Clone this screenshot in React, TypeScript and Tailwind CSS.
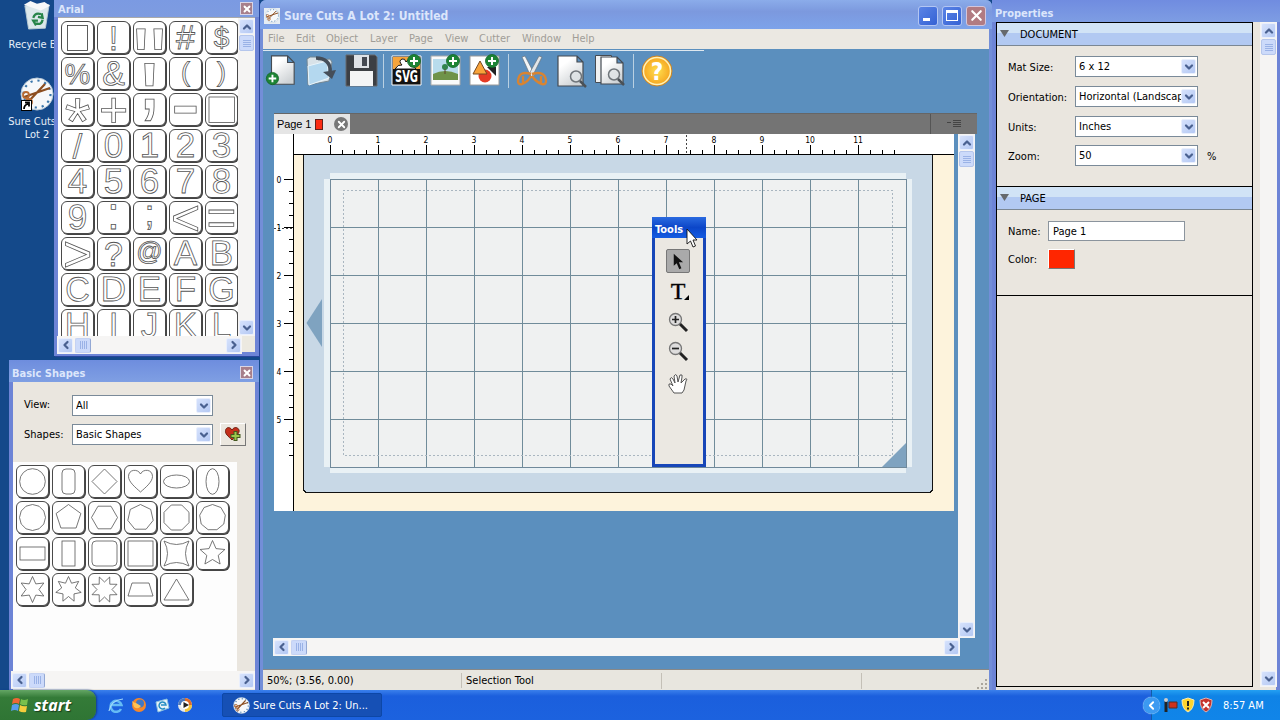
import type { ReactNode } from 'react';
import { ChevronDown, ChevronLeft, ChevronRight, ChevronUp, X } from 'lucide-react';

const chevrons = { up: ChevronUp, down: ChevronDown, left: ChevronLeft, right: ChevronRight };

type Direction = keyof typeof chevrons;

// character, font size, vertical centre of the ink above the baseline (em)
const glyphs: [string, number, number][] = [
  ['', 0, 0], ['!', 34, 0.36], ['"', 96, 0.595], ['#', 34, 0.35], ['$', 28, 0.34],
  ['%', 29, 0.35], ['&', 34, 0.35], ["'", 104, 0.595], ['(', 27, 0.26], [')', 27, 0.26],
  ['*', 66, 0.53], ['+', 50, 0.34], [',', 92, -0.01], ['-', 88, 0.27], ['.', 0, 0],
  ['/', 34, 0.36], ['0', 35, 0.34], ['1', 35, 0.34], ['2', 35, 0.34], ['3', 35, 0.34],
  ['4', 35, 0.34], ['5', 35, 0.34], ['6', 35, 0.34], ['7', 35, 0.34], ['8', 35, 0.34],
  ['9', 35, 0.34], [':', 46, 0.26], [';', 36, 0.2], ['<', 50, 0.34], ['=', 51, 0.34],
  ['>', 50, 0.34], ['?', 34, 0.36], ['@', 26, 0.26], ['A', 35, 0.34], ['B', 35, 0.34],
  ['C', 34, 0.34], ['D', 35, 0.34], ['E', 35, 0.34], ['F', 35, 0.34], ['G', 34, 0.34],
  ['H', 35, 0.34], ['I', 35, 0.34], ['J', 35, 0.34], ['K', 35, 0.34], ['L', 35, 0.34],
];

function polygon(sides: number, r = 13, inner = 0, turn = 0) {
  const count = inner ? sides * 2 : sides;
  return Array.from({ length: count }, (_, i) => {
    const a = -Math.PI / 2 + turn + (i * 2 * Math.PI) / count;
    const radius = inner && i % 2 ? inner : r;
    return `${(16.5 + radius * Math.cos(a)).toFixed(1)},${(16.5 + radius * Math.sin(a)).toFixed(1)}`;
  }).join(' ');
}

const shapes: ReactNode[] = [
  <circle cx="16.5" cy="16.5" r="12.8" />,
  <rect x="10" y="4" width="13" height="25" rx="4" />,
  <path d="M16.5 4 29 16.5 16.5 29 4 16.5Z" />,
  <path d="M16.5 27C12 23 4.500 17 4.500 11.500C4.500 4 14 3.500 16.500 9C19 3.500 28.500 4 28.500 11.500C28.500 17 21 23 16.500 27Z" />,
  <ellipse cx="16.5" cy="16.500" rx="13" ry="6.500" />,
  <ellipse cx="16.5" cy="16.5" rx="6.500" ry="12.800" />,
  <polygon points={polygon(12)} />,
  <polygon points={polygon(5)} />,
  <polygon points={polygon(6, 13, 0, Math.PI / 6)} />,
  <polygon points={polygon(7)} />,
  <polygon points={polygon(8, 13.500, 0, Math.PI / 8)} />,
  <polygon points={polygon(9)} />,
  <rect x="4" y="10" width="25" height="13" />,
  <rect x="10" y="4" width="13" height="25" />,
  <rect x="4" y="4" width="25" height="25" rx="4" />,
  <rect x="4" y="4" width="25" height="25" />,
  <path d="M4 4Q16.500 11 29 4Q22 16.500 29 29Q16.500 22 4 29Q11 16.500 4 4Z" />,
  <polygon points={polygon(5, 13, 6)} />,
  <polygon points={polygon(6, 13, 6.5)} />,
  <polygon points={polygon(7, 13, 7)} />,
  <polygon points={polygon(8, 13.500, 7.500, Math.PI / 8)} />,
  <path d="M8 10H25L29 23H4Z" />,
  <path d="M16.500 6 29 27H4Z" />,
];

function Tile({ children }: { children: ReactNode }) {
  return (
    <div className="h-[33px] w-[33px] shrink-0 rounded-[6px] border border-[#4a4a4a] bg-white shadow-[1px_1px_0_#444]">
      <svg width="33" height="33" viewBox="0 0 33 33" className="-ml-px -mt-px" fill="none" stroke="#555" strokeWidth="0.8">
        {children}
      </svg>
    </div>
  );
}

function Glyph({ glyph }: { glyph: [string, number, number] }) {
  const [char, size, mid] = glyph;
  if (char === '') return <Tile><rect x="6.500" y="4.500" width="20" height="25" stroke="#333" /></Tile>;
  if (char === '.') return <Tile><rect x="4" y="4" width="25.500" height="25.500" /></Tile>;
  return (
    <Tile>
      <text
        x="16.5"
        y={16.5 + size * mid}
        fontSize={size}
        textAnchor="middle"
        fontFamily="Liberation Sans, sans-serif"
        textRendering="geometricPrecision"
      >
        {char}
      </text>
    </Tile>
  );
}

function ScrollButton({ dir }: { dir: Direction }) {
  const Icon = chevrons[dir];
  return (
    <div className="flex h-[15px] w-[15px] shrink-0 items-center justify-center rounded-[2px] border border-[#e9effd] bg-gradient-to-br from-[#d6e2fc] to-[#b4c8f3]">
      <Icon size={12} strokeWidth={4.500} color="#4a6190" />
    </div>
  );
}

function Scrollbar({ vertical = false, thumb = true }: { vertical?: boolean; thumb?: boolean }) {
  return (
    <div
      className={
        vertical
          ? 'flex h-full w-[17px] flex-col items-center justify-between bg-[#f5f4f3] p-px'
          : 'flex h-[18px] w-full items-center justify-between bg-[#f6f5f4] p-px'
      }
    >
      <div className={vertical ? 'flex flex-col gap-px' : 'flex gap-[2px]'}>
        <ScrollButton dir={vertical ? 'up' : 'left'} />
        {thumb && (
          <div
            className={
              vertical
                ? 'flex h-4 w-[15px] flex-col items-center justify-center gap-px rounded-[2px] border border-[#b5c6ec] bg-[#ccdafa]'
                : 'flex h-[15px] w-4 items-center justify-center gap-px rounded-[2px] border border-r-[#93a8d4] border-[#c5d2f2] bg-[#ccdafa]'
            }
          >
            {[0, 1, 2, 3].map((i) => (
              <span key={i} className={vertical ? 'h-px w-2 bg-[#9ab2e6]' : 'h-2 w-px bg-[#9ab2e6]'} />
            ))}
          </div>
        )}
      </div>
      <ScrollButton dir={vertical ? 'down' : 'right'} />
    </div>
  );
}

function Select({ value, className }: { value: string; className: string }) {
  return (
    <div className={`flex h-[21px] items-center justify-between border border-[#7a8a99] bg-white pl-[3px] pr-px ${className}`}>
      <span className="min-w-0 overflow-hidden whitespace-nowrap pt-px">{value}</span>
      <ScrollButton dir="down" />
    </div>
  );
}

function CloseBox() {
  return (
    <div className="flex h-[13px] w-[13px] items-center justify-center border border-[#d9d5e6] bg-[#a77f8b]">
      <X size={10} strokeWidth={4.500} color="#fff" />
    </div>
  );
}

function Plus({ x, y }: { x: number; y: number }) {
  return (
    <g>
      <circle cx={x} cy={y} r="6.500" fill="#1d8434" stroke="#126427" strokeWidth="0.8" />
      <path d={`M${x - 4} ${y}h8M${x} ${y - 4}v8`} stroke="#fff" strokeWidth="2" />
    </g>
  );
}

function Magnifier() {
  return (
    <g>
      <circle cx="22" cy="22.500" r="5.500" fill="#dfe3e6" fillOpacity="0.800" stroke="#70767b" strokeWidth="1.500" />
      <path d="M26 27l6 6" stroke="#4b5157" strokeWidth="2.500" />
    </g>
  );
}

function ToolIcon({ children, className = 'w-[39px]' }: { children: ReactNode; className?: string }) {
  return (
    <div className={`flex shrink-0 justify-center ${className}`}>
      <svg width="36" height="38" viewBox="0 0 36 38" fill="none">{children}</svg>
    </div>
  );
}

function Separator() {
  return <div className="mt-[2px] h-[34px] w-px shrink-0 bg-[#b9d0e2]" />;
}

function Clock({ size }: { size: number }) {
  return (
    <svg width={size} height={size} viewBox="0 0 34 34" className="shrink-0">
      <circle cx="17" cy="17" r="16" fill="#f6f8fa" stroke="#b8c9d8" />
      <circle cx="17" cy="17" r="13.500" fill="none" stroke="#3c77ab" strokeWidth="2.200" strokeDasharray="2.200 4.870" />
      <path d="M4 20 30 11M8 25 25 7" stroke="#8c4e20" strokeWidth="2.200" />
      <circle cx="6" cy="18" r="3" fill="none" stroke="#b86a31" strokeWidth="1.800" />
      <circle cx="9" cy="25" r="3" fill="none" stroke="#b86a31" strokeWidth="1.800" />
    </svg>
  );
}

function Toolbar() {
  return (
    <div className="flex h-[62px] items-start pt-px">
      <svg width="0" height="0" className="absolute">
        <defs>
          <linearGradient id="paper" x2="0.6" y2="1">
            <stop offset="0.3" stopColor="#fff" />
            <stop offset="1" stopColor="#cfd3d6" />
          </linearGradient>
          <radialGradient id="gold">
            <stop stopColor="#ffdf4f" />
            <stop offset="1" stopColor="#f5a21d" />
          </radialGradient>
        </defs>
      </svg>
      <ToolIcon className="w-[34px]">
        <path d="M9 3h17l7 7v23H9z M26 3v7h7" fill="url(#paper)" stroke="#454b52" strokeWidth="1.200" />
        <Plus x={10} y={27} />
      </ToolIcon>
      <ToolIcon className="w-[46px]">
        <path d="M5 7l3-2h6l2 3 12-1 2 3-3 19-21 4z" fill="#d8e2e8" stroke="#738693" />
        <path d="M6 14l19-5 2 17L7 33z" fill="#b4d8ef" stroke="#e8f4fb" />
        <path d="M14 6c9 0 15 5 14 14" stroke="#454e59" strokeWidth="3.500" />
        <path d="M21 20l13-2-4 9z" fill="#454e59" />
      </ToolIcon>
      <ToolIcon className="w-[36px]">
        <path d="M3 3h29l2 2v29H3z" fill="#3c3f44" stroke="#67696c" />
        <path d="M11 3h15v13H11z" fill="#dfe2e6" />
        <path d="M19 5h5v9h-5z" fill="#454951" />
        <path d="M7 19h23v15H7z" fill="#f3f4f5" />
      </ToolIcon>
      <div className="w-[4px]" />
      <Separator />
      <div className="w-[3px]" />
      <ToolIcon>
        <path d="M3 4h29v29H3z" fill="#111" stroke="#fff" />
        <path d="M4 5h27v12H4z" fill="#f5a43b" />
        <path d="M6 17q3-5 7-4-4-4 0-6 3-1 4 3 2-4 5-2 2 3-1 6 5 0 6 3z" fill="#fff" stroke="#111" />
        <path d="M4 17h27v15H4z" fill="#111" />
        <text x="17.500" y="30" textAnchor="middle" fontSize="15" fontWeight="700" fill="#fff" textLength="23" lengthAdjust="spacingAndGlyphs">SVG</text>
        <Plus x={25} y={9} />
      </ToolIcon>
      <ToolIcon>
        <path d="M3 4h29v29H3z" fill="#f9fafa" stroke="#aaa" />
        <path d="M5 7h25v21H5z" fill="#b8dcec" />
        <path d="M5 22q12-6 25 0v6H5z" fill="#6f9349" />
        <circle cx="17" cy="15" r="3" fill="#30844d" />
        <path d="M17 17v5" stroke="#61452a" />
        <Plus x={25} y={9} />
      </ToolIcon>
      <ToolIcon>
        <path d="M3 4h29v29H3z" fill="#fff" stroke="#999" />
        <circle cx="18" cy="24" r="6.500" fill="#e53b25" />
        <path d="M13 9l7 13H6z" fill="#f9a33a" stroke="#754820" />
        <path d="M20 15h9v9z" fill="#222" />
        <Plus x={25} y={9} />
      </ToolIcon>
      <div className="w-[4px]" />
      <Separator />
      <div className="w-[3px]" />
      <ToolIcon>
        <path d="M8 5l3-1 10 19-4 2z" fill="#f3f5f6" stroke="#67727d" strokeWidth="0.700" />
        <path d="M28 5l-3-1-10 18 3 3z" fill="#e2e6e9" stroke="#67727d" strokeWidth="0.700" />
        <path d="M17 22q-12-4-13 7 0 4 4 3 6-2 9-8M18 22q13-4 14 7 0 4-4 3-6-2-10-8M9 24v7M27 24v7" stroke="#d88432" strokeWidth="2.400" />
      </ToolIcon>
      <ToolIcon>
        <path d="M5 4h19l6 6v24H5z M24 4v6h6" fill="url(#paper)" stroke="#454b52" strokeWidth="1.200" />
        <g transform="translate(1 2)"><Magnifier /></g>
      </ToolIcon>
      <ToolIcon>
        <path d="M3.500 3.500h16v27h-16z" fill="#f0f1f2" stroke="#454b52" />
        <path d="M9 5h16l6 6v21H9z M25 5v6h6" fill="url(#paper)" stroke="#454b52" strokeWidth="1.200" />
        <Magnifier />
      </ToolIcon>
      <div className="w-[4px]" />
      <Separator />
      <div className="w-[3px]" />
      <ToolIcon>
        <circle cx="18" cy="19" r="15" fill="url(#gold)" stroke="#c8852a" />
        <circle cx="18" cy="19" r="13.500" stroke="#fff1b5" strokeWidth="1.500" />
        <text x="18" y="27.500" textAnchor="middle" fontSize="24" fontWeight="700" fill="#fff">?</text>
      </ToolIcon>
    </div>
  );
}

function Canvas() {
  const topTicks = Array.from({ length: 48 }, (_, i) => i);
  const leftTicks = Array.from({ length: 24 }, (_, i) => i);
  return (
    <svg width="680" height="377" viewBox="274 134 680 377" className="block shrink-0" shapeRendering="crispEdges">
      <rect x="274" y="134" width="680" height="377" fill="#fff" />
      <rect x="294" y="155" width="660" height="356" fill="#fdf3dc" />
      <path d="M303.500 155V488q0 4.500 4.500 4.500H928q4.500 0 4.500-4.500V155" fill="#c8d8e6" stroke="#111" />
      <path d="M330 173H906V179H912V467H906V473H330V467H324V179H330Z" fill="#e9f1f5" />
      <rect x="330.500" y="179.500" width="576" height="288" fill="#eff1f1" stroke="#70899a" />
      {Array.from({ length: 11 }, (_, i) => (
        <path key={i} d={`M${378.500 + i * 48} 180V467`} stroke="#708c9a" />
      ))}
      {Array.from({ length: 5 }, (_, i) => (
        <path key={i} d={`M331 ${227.500 + i * 48}H906`} stroke="#708c9a" />
      ))}
      <rect x="343" y="190.500" width="549.500" height="264.500" fill="none" stroke="#a9b6c0" strokeDasharray="2 2" />
      <g shapeRendering="auto" fill="#7fa3c0">
        <path d="M306.500 323 322 299V347Z" />
        <path d="M882 467 906 443V467Z" />
      </g>
      <path d="M293 154.500H954M293.500 134V511" stroke="#000" />
      {topTicks.map((i) => (
        <path key={i} d={`M${330.500 + i * 12} ${i % 4 ? 150 : 145}V154`} stroke="#000" />
      ))}
      {leftTicks.map((i) => (
        <path key={i} d={`M${i % 4 ? 289 : 284} ${179.500 + i * 12}H293`} stroke="#000" />
      ))}
      <path d="M686.500 135V154" stroke="#444" strokeDasharray="2 2" />
      <path d="M274 228.500H293" stroke="#444" strokeDasharray="2 2" />
      <g fontSize="8.500" textAnchor="middle" fill="#000">
        {Array.from({ length: 12 }, (_, i) => (
          <text key={i} x={330 + i * 48} y="143">{i}</text>
        ))}
        {Array.from({ length: 6 }, (_, i) => (
          <text key={i} x="279" y={183 + i * 48}>{i}</text>
        ))}
      </g>
    </svg>
  );
}

function ArialPanel() {
  return (
    <section className="absolute left-[54px] top-0 flex h-[356px] w-[205px] flex-col border-x-4 border-b-4 border-[#6d84d6] bg-[#f4f2f0] shadow-[1px_1px_0_#28469c]">
      <header className="-mx-1 flex h-[17px] shrink-0 items-center justify-between bg-gradient-to-b from-[#7b9ae2] to-[#7e9ce0] pl-1 pr-[6px]">
        <h2 className="pt-[2px] font-bold text-[#dce6fb]">Arial</h2>
        <CloseBox />
      </header>
      <div className="flex h-[319px] shrink-0 border-t border-[#aaa]">
        <div className="grid h-full w-[182px] shrink-0 grid-cols-[repeat(5,33px)] content-start gap-[3px] overflow-hidden bg-white pl-[3px] pt-[3px]">
          {glyphs.map((glyph, i) => <Glyph key={i} glyph={glyph} />)}
        </div>
        <div className="-ml-[2px] h-full w-[17px]"><Scrollbar vertical /></div>
      </div>
      <div className="flex h-4 items-center bg-[#ece9e0]">
        <div className="-ml-px w-[185px] pt-[2px]"><Scrollbar /></div>
      </div>
    </section>
  );
}

function ShapesPanel() {
  return (
    <section className="absolute left-[9px] top-[360px] flex h-[332px] w-[250px] flex-col border-x-4 border-b-2 border-[#6d84d6] bg-[#eae6df]">
      <header className="-mx-1 flex h-[22px] shrink-0 items-center justify-between bg-gradient-to-b from-[#6e8dde] to-[#7f9fe3] pl-[3px] pr-[6px] pt-[3px]">
        <h2 className="pt-[2px] font-bold text-[#dce6fb]">Basic Shapes</h2>
        <CloseBox />
      </header>
      <div className="h-20 shrink-0 pl-[11px] pt-[13px]">
        <div className="mb-2 flex items-center">
          <span className="w-12 -translate-y-px">View:</span>
          <Select value="All" className="w-[141px]" />
        </div>
        <div className="flex items-center">
          <span className="w-12 whitespace-nowrap pt-px">Shapes:</span>
          <Select value="Basic Shapes" className="w-[141px]" />
          <button className="-my-1 ml-[7px] flex h-[23px] w-[26px] items-center justify-center border border-b-[#777] border-l-white border-r-[#777] border-t-white bg-[#ebe7df]">
            <svg width="18" height="17" viewBox="0 0 18 17">
              <path d="M8 14C4 10 1 8 1.500 4.500S6 .5 8 4c2-3.500 6-3 7 0s-3 6-7 10Z" fill="#c52f1b" stroke="#712214" />
              <path d="M11.500 5v10M6.500 10h10" stroke="#43571e" strokeWidth="4" />
              <path d="M11.500 6v8M7.500 10h8" stroke="#9cc74c" strokeWidth="2" />
            </svg>
          </button>
        </div>
      </div>
      <div className="grid h-[209px] w-[224px] shrink-0 grid-cols-[repeat(6,33px)] content-start gap-[3px] bg-[#fdfdfd] pl-[3px] pt-[3px]">
        {shapes.map((shape, i) => <Tile key={i}>{shape}</Tile>)}
      </div>
      <div className="-ml-[2px] w-[244px]"><Scrollbar /></div>
    </section>
  );
}

const menu = [
  ['File', 'w-[28px]'], ['Edit', 'w-[30px]'], ['Object', 'w-[44px]'], ['Layer', 'w-[39px]'], ['Page', 'w-[36px]'],
  ['View', 'w-[34px]'], ['Cutter', 'w-[43px]'], ['Window', 'w-[50px]'], ['Help', 'w-[30px]'],
];

function MainWindow() {
  return (
    <section className="absolute left-[260px] top-0 flex h-[691px] w-[732px] flex-col rounded-t-[6px] border-x-[3px] border-[#738ed8] bg-[#5b8fbe]">
      <header className="-mx-[3px] flex h-[29px] shrink-0 items-center rounded-t-[6px] bg-gradient-to-b from-[#8bacea] via-[#7c99de] via-40% to-[#7da3ea] px-[4px] pt-[2px]">
        <div className="flex h-4 w-4 items-center justify-center bg-[#e6edf3]"><Clock size={15} /></div>
        <h1 className="ml-[4px] grow pt-px text-[12px] font-bold tracking-[0.05px] text-[#dce6fb]">Sure Cuts A Lot 2: Untitled</h1>
        <div className="mr-[2px] flex gap-1">
          <div className="flex h-[20px] w-[20px] items-end rounded-[3px] border border-[#b3c6f3] bg-gradient-to-br from-[#5b84e6] to-[#3461d4] p-1"><span className="h-[3px] w-[7px] bg-white" /></div>
          <div className="flex h-[20px] w-[20px] items-center justify-center rounded-[3px] border border-[#b3c6f3] bg-gradient-to-br from-[#5b84e6] to-[#3461d4]"><span className="h-[11px] w-3 border border-t-[3px] border-white" /></div>
          <div className="flex h-[20px] w-[20px] items-center justify-center rounded-[3px] border border-[#d3c6dc] bg-[#b17b82]"><X size={17} strokeWidth={3} color="#fff" /></div>
        </div>
      </header>
      <nav className="flex h-[20px] shrink-0 items-center bg-[#ebe8e2] pl-[5px] text-[#a09d97]">
        {menu.map(([label, width]) => <span key={label} className={width}>{label}</span>)}
      </nav>
      <div className="mt-px h-px w-[441px] shrink-0 bg-[#dfe8ef]" />
      <Toolbar />
      <div className="ml-[11px] flex h-[21px] w-[703px] shrink-0 border-t border-[#666] bg-[#747474]">
        <div className="flex w-[76px] items-center bg-[#e5e5e5] pl-[3px] font-['Liberation_Sans',sans-serif] text-[11px]">
          <span className="w-[38px] shrink-0 whitespace-nowrap tracking-[-0.1px]">Page 1</span>
          <span className="h-[11px] w-2 shrink-0 border border-[#61201a] bg-[#fb2b12]" />
          <span className="ml-[11px] flex h-[14px] w-[14px] shrink-0 items-center justify-center rounded-full bg-[#777]"><X size={11} strokeWidth={4} color="#fff" /></span>
        </div>
        <div className="ml-auto flex w-[47px] items-center justify-center border-l border-[#555]">
          <svg width="16" height="10" fill="none" stroke="#444"><path d="M1 3.500h4M7 1.500h8M7 3.500h8M7 5.500h8M7 7.500h8" /></svg>
        </div>
      </div>
      <div className="ml-[11px] flex h-[504px] shrink-0">
        <Canvas />
        <div className="ml-[4px]"><Scrollbar vertical /></div>
      </div>
      <div className="ml-[10px] w-[687px] shrink-0"><Scrollbar /></div>
      <footer className="mt-auto flex h-[22px] shrink-0 items-center border-t border-[#888] bg-[#e8e6df]">
        <span className="w-[198px] pl-1 pt-px">50%; (3.56, 0.00)</span>
        <span className="w-[200px] border-l border-[#c4c0b7] pl-[4px] pt-px">Selection Tool</span>
        <span className="h-4 w-[200px] border-l border-[#c4c0b7]" />
        <span className="h-4 grow border-l border-[#c4c0b7]" />
        <svg width="13" height="13" fill="#aaa69d" className="self-end"><path d="M9 1h2v2H9zM5 5h2v2H5zM9 5h2v2H9zM1 9h2v2H1zM5 9h2v2H5zM9 9h2v2H9z" /></svg>
      </footer>
    </section>
  );
}

function SectionTitle({ children }: { children: ReactNode }) {
  return (
    <h3 className="flex h-[23px] items-center border-b border-[#7b8794] bg-[linear-gradient(#d1e3f6_45%,#b2c9f2_46%)] pt-[2px]">
      <svg width="23" height="10" className="-mt-[3px]"><path d="M3 1h9L7.500 8Z" fill="#66696d" /></svg>
      {children}
    </h3>
  );
}

function Field({ label, children, className }: { label: string; children: ReactNode; className: string }) {
  return (
    <div className={`flex items-center ${className}`}>
      <span className="w-[67px] shrink-0 whitespace-nowrap pt-[3px]">{label}</span>
      {children}
    </div>
  );
}

function PropertiesPanel() {
  return (
    <section className="absolute left-[992px] top-0 flex h-[690px] w-[288px] flex-col border-x-4 border-[#6d84d6] bg-[#eae6df]">
      <header className="-mx-1 flex h-[22px] shrink-0 items-center bg-gradient-to-b from-[#708ce0] to-[#7e9de3] pl-[3px] pt-[5px]">
        <h2 className="font-bold text-[#dce6fb]">Properties</h2>
      </header>
      <div className="flex h-[665px]">
        <div className="w-[257px] shrink-0 border border-black">
          <div className="h-[164px] border-b border-black">
            <SectionTitle>DOCUMENT</SectionTitle>
            <div className="pl-[11px] pt-[10px]">
              <Field label="Mat Size:" className="h-[21px]"><Select value="6 x 12" className="w-[123px]" /></Field>
              <Field label="Orientation:" className="mt-[9px] h-[21px]"><Select value="Horizontal (Landscap" className="w-[123px]" /></Field>
              <Field label="Units:" className="mt-[9px] h-[21px]"><Select value="Inches" className="w-[123px]" /></Field>
              <Field label="Zoom:" className="mt-2 h-[21px]"><Select value="50" className="w-[123px]" /><span className="ml-[9px] pt-[2px]">%</span></Field>
            </div>
          </div>
          <div className="h-[109px] border-b border-black">
            <SectionTitle>PAGE</SectionTitle>
            <div className="pl-[11px] pt-[11px]">
              <div className="flex h-5 items-center">
                <span className="w-10 pt-px">Name:</span>
                <div className="flex h-5 w-[137px] items-center border border-[#8b949d] bg-white pl-1 pt-px">Page 1</div>
              </div>
              <div className="mt-2 flex h-5 items-center">
                <span className="w-10 pt-px">Color:</span>
                <span className="h-5 w-[27px] border border-b-[#777] border-l-white border-r-[#777] border-t-white bg-[#ff2600]" />
              </div>
            </div>
          </div>
        </div>
        <div className="ml-auto w-[16px]"><Scrollbar vertical /></div>
      </div>
    </section>
  );
}

function ToolsPalette() {
  return (
    <aside className="absolute left-[652px] top-[217px] flex h-[250px] w-[54px] flex-col items-center border-[3px] border-t-0 border-[#1746b8] bg-[#ebe8e2]">
      <h2 className="-mx-[3px] mb-[11px] flex h-[21px] w-[54px] shrink-0 items-center bg-gradient-to-b from-[#2a6ae0] via-[#0c46c8] to-[#155ce2] pl-[3px] pt-[4px] font-bold text-white">Tools</h2>
      <div className="flex flex-col items-center pr-[2px]">
        <div className="flex h-6 w-6 items-center justify-center rounded-[2px] border border-[#777] bg-[#aaa]">
          <svg width="12" height="17" viewBox="0 0 14 20"><path d="M2 1V15L5.500 12 8.500 19 11 18 8 11H13Z" fill="#111" /></svg>
        </div>
        <svg width="24" height="24" viewBox="0 0 24 24" className="mb-[3px] mt-[6px]">
          <text x="12" y="20" textAnchor="middle" fontSize="24" fontFamily="Liberation Serif, serif" stroke="#111" strokeWidth="0.400">T</text>
          <path d="M23 16v5h-5Z" />
        </svg>
        {['M6 8.500h7M9.500 5v7', 'M6 8.500h7'].map((sign) => (
          <svg key={sign} width="24" height="24" viewBox="0 0 24 24" className="mt-[5px] shrink-0" fill="none">
            <path d="M13 12l8 8" stroke="#222" strokeWidth="3" />
            <circle cx="9.500" cy="8.500" r="6" fill="#dedddd" stroke="#777" strokeWidth="1.300" />
            <path d={sign} stroke="#222" strokeWidth="1.700" />
          </svg>
        ))}
        <svg width="24" height="24" viewBox="0 0 24 24" className="mt-[8px] shrink-0">
          <path d="M8 21 3 14q-1-3 2-2l2 2L4 7q1-3 3 0l2 4-1-7q2-3 3 0l1 6 2-7q3-1 2 2l-1 6 4-4q3-1 1 2l-2 9-2 3Z" fill="#fff" stroke="#555" />
        </svg>
      </div>
    </aside>
  );
}

function Taskbar() {
  return (
    <footer className="absolute bottom-0 left-0 flex h-[30px] w-full items-center bg-gradient-to-b from-[#3b80ec] via-[#1b5fdd] via-20% to-[#1c62df] text-white">
      <button className="flex h-full w-[96px] items-center rounded-r-[9px] bg-gradient-to-b from-[#64a665] via-[#347b38] via-25% to-[#2f7534] pl-[11px] shadow-[1px_0_2px_#123d8c]">
        <svg width="18" height="18" viewBox="0 0 18 18">
          <path d="M2 3q4-2 7 0L8 8Q5 6 1 8Z" fill="#ee6736" />
          <path d="M10 3q3 2 7 0l-1 6q-4 1-7-1Z" fill="#79c04c" />
          <path d="M1 9q4-2 7 0l-1 6q-3-2-7 0Z" fill="#579ded" />
          <path d="M9 9q3 2 7 1l-1 6q-4 1-7-1Z" fill="#f6cd3c" />
        </svg>
        <span className="ml-[5px] font-['Noto_Sans',sans-serif] text-[16px] font-bold italic leading-none [text-shadow:1px_1px_1px_#183f1b]">start</span>
      </button>
      <div className="ml-[12px] flex w-[114px] gap-[7px]">
        <svg width="16" height="16" viewBox="0 0 16 16" fill="none"><path d="M13 12a5.500 5.500 0 1 1 .5-4H4" stroke="#65bcf5" strokeWidth="2.500" /><path d="M1 14Q3 3 15 2" stroke="#a5dafa" strokeWidth="1.200" /></svg>
        <svg width="16" height="16" viewBox="0 0 16 16"><circle cx="8" cy="8" r="7" fill="#f4872b" /><circle cx="9" cy="6.500" r="4" fill="#4178c4" /><path d="M1 4q2 2 4 2l5 3q-3 4-7 1Z" fill="#ffc253" /></svg>
        <svg width="16" height="16" viewBox="0 0 16 16" fill="none"><path d="M2 5 13 2l2 9-11 4Z" fill="#e9f3f8" stroke="#8bc2df" /><path d="M11 11a3.500 3.500 0 1 1 1-3H7" stroke="#278fc4" strokeWidth="1.500" /></svg>
        <svg width="16" height="16" viewBox="0 0 16 16"><circle cx="8" cy="8" r="7" fill="#e8eaec" /><path d="M8 1a7 7 0 0 1 7 7H8Z" fill="#df6b28" /><path d="M8 1a7 7 0 0 0-7 7h7Z" fill="#4d79bd" /><path d="M8 15a7 7 0 0 0 7-7H8Z" fill="#f4c63d" /><circle cx="8" cy="8" r="4" fill="#fff" /><path d="M6.500 5v6L12 8Z" fill="#222" /></svg>
      </div>
      <div className="flex h-[24px] w-[160px] items-center gap-[3px] rounded-[2px] border border-[#0d47a7] bg-[#1650b5] pl-[10px] pt-px">
        <Clock size={17} />
        <span className="whitespace-nowrap">Sure Cuts A Lot 2: Un...</span>
      </div>
      <div className="ml-auto flex h-full w-[129px] items-center border-l border-[#125ca8] bg-gradient-to-b from-[#24a0f2] via-[#0f83e6] via-20% to-[#1085e9]">
        <div className="-ml-[9px] flex h-[17px] w-[17px] shrink-0 items-center justify-center rounded-full bg-[#3c9af1] shadow-[0_0_1px_#fff]"><ChevronLeft size={13} strokeWidth={3.500} /></div>
        <svg width="16" height="16" viewBox="0 0 16 16" className="ml-[2px]"><path d="M4 3v12" stroke="#222" strokeWidth="3" /><circle cx="4" cy="3" r="2" fill="#ccc" /><path d="M7 5h8v6H7Z" fill="#ce321e" stroke="#592c25" /></svg>
        <svg width="14" height="16" viewBox="0 0 14 16" className="ml-[3px]"><path d="M7 1 13 3q0 9-6 12Q1 12 1 3Z" fill="#ffd52e" stroke="#f7ebb2" /><path d="M7 4v5M7 10.500v2" stroke="#222" strokeWidth="2" /></svg>
        <svg width="14" height="16" viewBox="0 0 14 16" className="ml-[4px]"><path d="M7 1 13 3q0 9-6 12Q1 12 1 3Z" fill="#c7322c" stroke="#ddb2b0" /><path d="m4 5 6 6m0-6-6 6" stroke="#fff" strokeWidth="2" /></svg>
        <span className="ml-[10px] whitespace-nowrap pt-px">8:57 AM</span>
      </div>
    </footer>
  );
}

export default function App() {
  return (
    <main className="relative h-[720px] w-[1280px] overflow-hidden bg-[#14498a] font-['DejaVu_Sans_Condensed','DejaVu_Sans',sans-serif] text-[11px] leading-[14px] text-black">
      <div className="absolute left-[10px] top-0 flex w-[54px] flex-col items-center whitespace-nowrap text-[#e6eef8]">
        <svg width="28" height="32" viewBox="0 0 30 34">
          <path d="M2 6 28 5 24 30 6 31Z" fill="#dce8eb" stroke="#b9cbd4" />
          <path d="M1 5 8 1l7 3 8-2 6 4-10 5Z" fill="#f7f9f9" />
          <path d="M11 19q2-6 8-4M20 14l1 5-5-1M21 21q-1 6-7 4M14 27l-3-5 5 0" fill="none" stroke="#28854a" strokeWidth="2.500" />
        </svg>
        <span className="mt-[6px]">Recycle Bin</span>
      </div>
      <div className="absolute left-[9px] top-[77px] flex w-[56px] flex-col items-center whitespace-nowrap text-[#e6eef8]">
        <Clock size={34} />
        <div className="relative -mt-[11px] mb-[4px] h-[11px] w-[11px] translate-x-[12px] self-start border border-black bg-white">
          <svg width="9" height="9" viewBox="0 0 9 9" fill="none"><path d="M2 8Q2 4 6 3M3 1.500h4v4" stroke="#000" strokeWidth="1.800" /></svg>
        </div>
        <span>Sure Cuts A</span>
        <span className="-mt-px">Lot 2</span>
      </div>
      <ArialPanel />
      <ShapesPanel />
      <MainWindow />
      <PropertiesPanel />
      <ToolsPalette />
      <Taskbar />
      <svg width="12" height="20" viewBox="0 0 12 20" className="absolute left-[686px] top-[228px]">
        <path d="M1 1V16L4.500 13 7 19 9.500 18 7 12H11Z" fill="#fff" stroke="#111" strokeWidth="0.900" />
      </svg>
    </main>
  );
}
